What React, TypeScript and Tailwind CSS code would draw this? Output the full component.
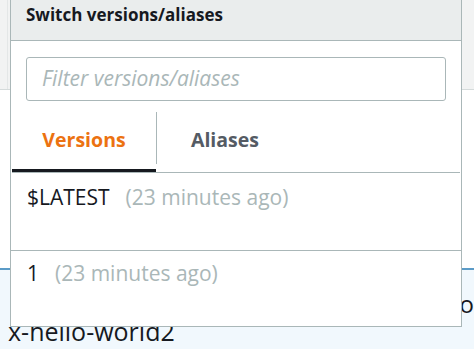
import React from 'react';

const FONT = { fontFamily: '"Open Sans", "Noto Sans", Arial, sans-serif' };

function VersionRow({ name, age, tall }: { name: string; age: string; tall?: boolean }) {
  return (
    <div className={`flex items-baseline gap-[16px] px-[16px] ${tall ? 'h-[78px] pt-[9px] border-b border-[#aab7b8]' : 'pt-[7px]'}`}>
      <span className="text-[21px] leading-[30px] text-[#16191f]">{name}</span>
      <span className="text-[21px] leading-[30px] text-[#aab7b8]">{age}</span>
    </div>
  );
}

export default function App() {
  return (
    <div className="relative h-[349px] w-[474px] overflow-hidden bg-white" style={FONT}>
      {/* page behind the dropdown */}
      <div className="h-[90px] border-b border-[#d5dbdb] bg-[#f2f3f3]">
        <div className="ml-[7px] h-full w-px bg-[#e4e7e7]" />
      </div>
      <div className="h-[180px] border-b-2 border-[#5b9bc7] bg-white" />
      <div className="flex h-[79px] flex-col bg-[#f1f8fd] px-[8px]">
        <div className="flex justify-end pt-[19px] text-[24px] leading-[30px] text-[#16191f]">
          <span className="-mr-[8px]">Info</span>
        </div>
        <div className="-mt-[3px] text-[25px] leading-[30px] text-[#16191f]">x-hello-world2</div>
      </div>

      {/* dropdown */}
      <div className="absolute left-[10px] top-[-1px] flex h-[328px] w-[452px] flex-col border border-[#aab7b8] bg-white">
        <div className="flex h-[41px] items-start border-b border-[#aab7b8] bg-[#eaeded] px-[15px] pt-[2px]">
          <span className="text-[17px] font-bold text-[#16191f]">Switch versions/aliases</span>
        </div>
        <div className="px-[15px] pt-[16px]">
          <div className="flex h-[44px] items-center rounded-[3px] border border-[#aab7b8] px-[15px]">
            <span className="text-[21px] italic text-[#aab7b8]">Filter versions/aliases</span>
          </div>
        </div>
        <div className="mx-[1px] mt-[11px] flex h-[61px] border-b border-[#aab7b8]">
          <div className="flex w-[144px] items-center justify-center border-b-[3px] border-[#16191f] pb-[2px]">
            <span className="text-[19.5px] font-bold text-[#ec7211]">Versions</span>
          </div>
          <div className="mb-[8px] w-px bg-[#aab7b8]" />
          <div className="flex w-[136px] items-center justify-center pb-[5px]">
            <span className="text-[19.5px] font-bold text-[#545b64]">Aliases</span>
          </div>
        </div>
        <VersionRow name="$LATEST" age="(23 minutes ago)" tall />
        <VersionRow name="1" age="(23 minutes ago)" />
      </div>
    </div>
  );
}
